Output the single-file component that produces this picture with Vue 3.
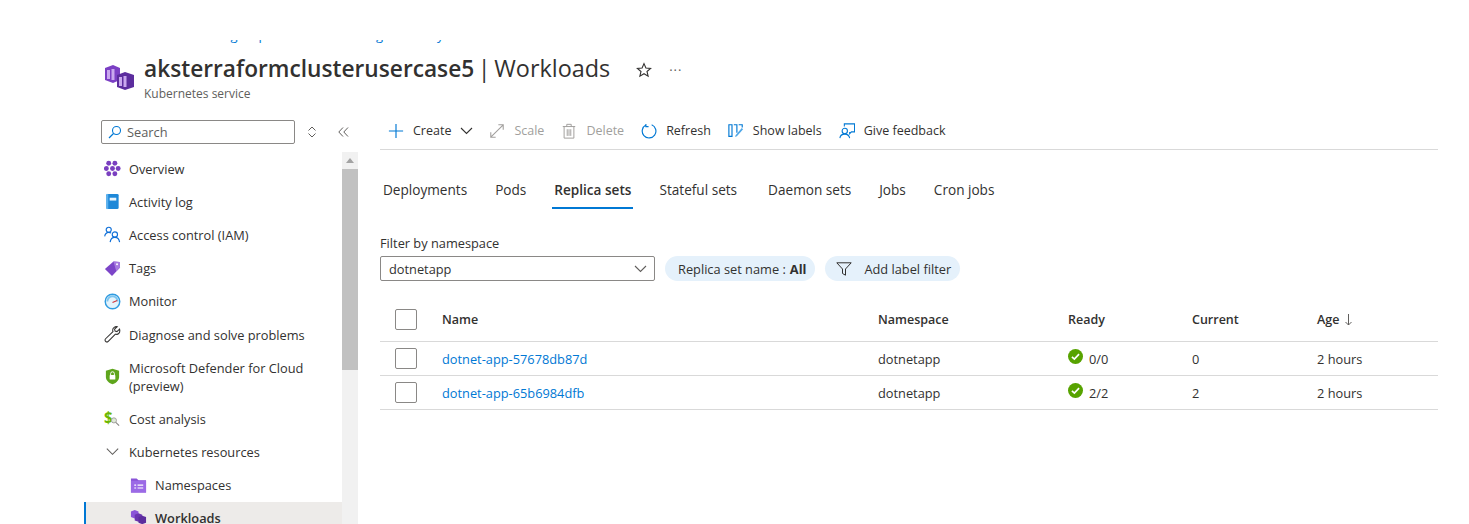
<template>
  <div class="page">
    <div class="crumb-clip"><div class="crumb">Home &gt; Resource groups &gt; aksterraform-rg &gt; Overlay</div></div>

    <header class="title-row">
      <svg class="res-icon" viewBox="0 0 30 26">
        <path d="M1 3 L9 0 L16 3 V15 L9 18 L1 15Z" fill="#7b3fc4"/>
        <path d="M3 5h3v9H3zM7.500 4h3v11h-3z" fill="#c9a8ee"/>
        <path d="M13 10 L21 7 L30 10 V22 L21 25 L13 22Z" fill="#5c2d9e"/>
        <path d="M15 12h3v9h-3zM19.500 11h3v11h-3z" fill="#c9a8ee"/>
      </svg>
      <div class="title-text">
        <h1 class="title"><b>aksterraformclusterusercase5</b> | Workloads</h1>
        <div class="subtitle">Kubernetes service</div>
      </div>
      <svg class="star" viewBox="0 0 16 16"><path d="M8 1.600l1.900 4.400 4.700.4-3.600 3.100 1.100 4.700L8 11.700l-4.100 2.500 1.100-4.700L1.400 6.400l4.700-.4z" fill="none" stroke="#323130" stroke-width="1.100"/></svg>
      <span class="more">···</span>
    </header>

    <div class="body">
      <aside class="side">
        <div class="side-top">
          <div class="search">
            <svg width="14" height="14" viewBox="0 0 14 14"><circle cx="8.500" cy="5.500" r="4" fill="none" stroke="#0078d4" stroke-width="1.100"/><path d="M5.500 8.500L1 13" stroke="#0078d4" stroke-width="1.200"/></svg>
            <span>Search</span>
          </div>
          <svg class="updown" width="10" height="12" viewBox="0 0 10 12"><path d="M1.500 4.500L5 1l3.500 3.500M1.500 7.500L5 11l3.500-3.500" fill="none" stroke="#605e5c"/></svg>
          <svg class="collapse" width="11" height="10" viewBox="0 0 11 10"><path d="M5 .5L.8 5 5 9.500M10 .5L5.800 5 10 9.500" fill="none" stroke="#605e5c"/></svg>
        </div>

        <div class="nav-wrap">
          <nav class="nav">
            <div class="nav-item">
              <svg class="nav-icon" viewBox="0 0 18 18"><g fill="#7a3fc0"><circle cx="5" cy="3.500" r="2.600"/><circle cx="11.500" cy="3.500" r="2.600"/><circle cx="2.500" cy="9" r="2.600"/><circle cx="9" cy="9" r="2.600"/><circle cx="15" cy="9" r="2.600"/><circle cx="5" cy="14.500" r="2.600"/><circle cx="11.500" cy="14.500" r="2.600"/></g></svg>
              <span>Overview</span>
            </div>
            <div class="nav-item">
              <svg class="nav-icon" viewBox="0 0 18 18"><rect x="2.500" y="1" width="13" height="16" rx="1.500" fill="#1e88d8"/><rect x="2.500" y="1" width="2" height="16" fill="#5ab0ee"/><rect x="6" y="5" width="7" height="3" fill="#e8f4fc"/></svg>
              <span>Activity log</span>
            </div>
            <div class="nav-item">
              <svg class="nav-icon" viewBox="0 0 18 18"><g fill="none" stroke="#0f6fd8" stroke-width="1.200"><circle cx="5" cy="4" r="2.700"/><path d="M.7 11c.5-3 2.200-4.300 4.300-4.300 1 0 1.800.2 2.500.7"/><circle cx="11.500" cy="9" r="2.800"/><path d="M6.500 17c.4-3 2.400-5 5-5s4.600 2 5 5"/></g></svg>
              <span>Access control (IAM)</span>
            </div>
            <div class="nav-item">
              <svg class="nav-icon" viewBox="0 0 18 18"><path d="M1 9.500L10 1.500l6.500.5.500 6-8.500 9z" fill="#7c45c8"/><path d="M10 1.500l6.500.5.500 6-4 4z" fill="#a77be0"/><circle cx="13.800" cy="4.500" r="1" fill="#fff"/></svg>
              <span>Tags</span>
            </div>
            <div class="nav-item">
              <svg class="nav-icon" viewBox="0 0 18 18"><circle cx="9" cy="9" r="7.700" fill="#e3f3fc" stroke="#2f9be0" stroke-width="1.500"/><path d="M3.500 9a5.500 5.500 0 0 1 11 0" fill="none" stroke="#7cc4ee" stroke-width="2"/><path d="M9 10l5-2" stroke="#d13438" stroke-width="1.200"/></svg>
              <span>Monitor</span>
            </div>
            <div class="nav-item">
              <svg class="nav-icon" viewBox="0 0 18 18"><path d="M16.500 3.200l-2.800 2.700-2-.5-.5-2L14 .8c-2.300-.6-4.700 1-4.800 3.500 0 .6 0 1.100.3 1.600L1.700 13.500c-.8.800-.8 2 0 2.800s2 .8 2.800 0l7.600-7.700c2.700 1 5.500-1.300 4.400-5.400z" fill="none" stroke="#323130" stroke-width="1.100"/></svg>
              <span>Diagnose and solve problems</span>
            </div>
            <div class="nav-item tall">
              <svg class="nav-icon" viewBox="0 0 18 18"><path d="M9 .8l7 2.200v6.500c0 3.800-3.500 6.500-7 7.700-3.500-1.200-7-3.900-7-7.700V3z" fill="#5ea51c"/><rect x="6" y="7.500" width="6" height="4.800" rx=".6" fill="#fff"/><path d="M7 7.500V6a2 2 0 0 1 4 0v1.500" fill="none" stroke="#fff"/></svg>
              <span>Microsoft Defender for Cloud (preview)</span>
            </div>
            <div class="nav-item">
              <svg class="nav-icon" viewBox="0 0 18 18"><text x="0" y="14" class="dollar">$</text><circle cx="10.500" cy="11" r="2.700" fill="#dfe9d8" stroke="#a19f9d"/><path d="M12.500 13l3.500 3.500" stroke="#8a8886" stroke-width="1.200"/></svg>
              <span>Cost analysis</span>
            </div>
            <div class="nav-item">
              <svg class="nav-icon" viewBox="0 0 18 18"><path d="M3 6l6 6 6-6" fill="none" stroke="#605e5c" stroke-width="1.100"/></svg>
              <span>Kubernetes resources</span>
            </div>
            <div class="nav-item sub">
              <svg class="nav-icon" viewBox="0 0 18 18"><path d="M1 1.500h6l2 2h8v13H1z" fill="#8a54d8"/><path d="M1 4h16v12.500H1z" fill="#9b6ae6"/><path d="M4.500 8h2v1.200h-2zM8 8h6v1.200H8zM4.500 11h2v1.200h-2zM8 11h6v1.200H8z" fill="#fff"/></svg>
              <span>Namespaces</span>
            </div>
            <div class="nav-item sub active">
              <svg class="nav-icon" viewBox="0 0 18 18"><path d="M1 1.500L5 0l4 1.500v6L5 9 1 7.500z" fill="#8a54d8"/><path d="M5 5l4-1.500L13 5v6l-4 1.500L5 11z" fill="#6a35b0"/><path d="M9 7.500l4-1.500 4 1.500v6L13 15l-4-1.500z" fill="#5c2d9e"/></svg>
              <span>Workloads</span>
            </div>
          </nav>
          <div class="scrollbar">
            <div class="arrow"></div>
            <div class="thumb"></div>
          </div>
        </div>
      </aside>

      <main class="main">
        <div class="toolbar">
          <div class="tool">
            <svg class="tool-icon" viewBox="0 0 18 18"><path d="M9 1v16M1 9h16" stroke="#0078d4" stroke-width="1.300"/></svg>
            <span>Create</span>
            <svg class="caret" width="13" height="8" viewBox="0 0 13 8"><path d="M1 1l5.500 5.500L12 1" fill="none" stroke="#323130" stroke-width="1.100"/></svg>
          </div>
          <div class="tool off">
            <svg class="tool-icon" viewBox="0 0 18 18"><path d="M2 16L16 2M10.500 2H16v5.500M2 10.500V16h5.500" fill="none" stroke="#a19f9d" stroke-width="1.200"/></svg>
            <span>Scale</span>
          </div>
          <div class="tool off">
            <svg class="tool-icon" viewBox="0 0 18 18"><path d="M2 4h14M6.500 4V1.500h5V4M3.500 4v13h11V4M7 7v7.500M9 7v7.500M11 7v7.500" fill="none" stroke="#a19f9d" stroke-width="1.100"/></svg>
            <span>Delete</span>
          </div>
          <div class="tool">
            <svg class="tool-icon" viewBox="0 0 18 18"><path d="M5.500 2.300a7.700 7.700 0 1 0 6.500-.3M5.500 1v3h3" fill="none" stroke="#0078d4" stroke-width="1.300"/></svg>
            <span>Refresh</span>
          </div>
          <div class="tool">
            <svg class="tool-icon" viewBox="0 0 18 18"><path d="M1 2h3.500v13H1zM6.500 2H10v9M12 2h4v3" fill="none" stroke="#0078d4" stroke-width="1.300"/><path d="M10 15l7-8-1.500-1.300-7 8-.5 2z" fill="#50a8e8"/></svg>
            <span>Show labels</span>
          </div>
          <div class="tool">
            <svg class="tool-icon" viewBox="0 0 18 18"><circle cx="6.500" cy="9" r="3" fill="none" stroke="#0078d4" stroke-width="1.200"/><path d="M1 17c.3-2.700 2.500-4.500 5.500-4.500s5 1.800 5.500 4.500" fill="none" stroke="#0078d4" stroke-width="1.200"/><path d="M6 4V1h11.500v9H14l-2 2v-2" fill="none" stroke="#0078d4" stroke-width="1.200"/></svg>
            <span>Give feedback</span>
          </div>
        </div>

        <div class="tabs">
          <div v-for="tab in tabs" :key="tab" class="tab" :class="{ selected: tab === 'Replica sets' }">{{ tab }}</div>
        </div>

        <div class="filter-label">Filter by namespace</div>
        <div class="filters">
          <div class="select">
            <span>dotnetapp</span>
            <svg width="13" height="8" viewBox="0 0 13 8"><path d="M1 1l5.500 5.500L12 1" fill="none" stroke="#605e5c" stroke-width="1.100"/></svg>
          </div>
          <div class="pill">Replica set name : <b>All</b></div>
          <div class="pill add">
            <svg width="16" height="14" viewBox="0 0 16 14"><path d="M.8.800h14.400L9.500 7v6.200L6.500 11.500V7z" fill="none" stroke="#323130"/></svg>
            <span>Add label filter</span>
          </div>
        </div>

        <div class="table">
          <div class="row head">
            <div class="check"></div>
            <div>Name</div>
            <div>Namespace</div>
            <div>Ready</div>
            <div>Current</div>
            <div class="age">
              <span>Age</span>
              <svg width="7" height="12" viewBox="0 0 7 12"><path d="M3.500 0v11M.5 8l3 3 3-3" fill="none" stroke="#605e5c"/></svg>
            </div>
          </div>
          <div v-for="rs in replicaSets" :key="rs.name" class="row">
            <div class="check"></div>
            <div class="link">{{ rs.name }}</div>
            <div>dotnetapp</div>
            <div class="ready">
              <svg width="15" height="15" viewBox="0 0 16 16"><circle cx="8" cy="8" r="8" fill="#57a300"/><path d="M4.200 8.300l2.600 2.500 5-5.300" fill="none" stroke="#fff" stroke-width="1.800"/></svg>
              <span>{{ rs.ready }}</span>
            </div>
            <div>{{ rs.current }}</div>
            <div>2 hours</div>
          </div>
        </div>
      </main>
    </div>
  </div>
</template>

<script setup>
const tabs = ['Deployments', 'Pods', 'Replica sets', 'Stateful sets', 'Daemon sets', 'Jobs', 'Cron jobs']

const replicaSets = [
  { name: 'dotnet-app-57678db87d', ready: '0/0', current: 0 },
  { name: 'dotnet-app-65b6984dfb', ready: '2/2', current: 2 },
]
</script>

<style>
html, body {
  margin: 0;
  background: #fff;
  overflow: hidden;
}
</style>

<style scoped>
.page {
  width: 1469px;
  height: 524px;
  overflow: hidden;
  background: #fff;
  color: #323130;
  font-family: "Open Sans", "Noto Sans", sans-serif;
  font-size: 12.800px;
  box-sizing: border-box;
}

/* only the descenders of the breadcrumb are left in the shot */
.crumb-clip {
  height: 3px;
  margin-top: 40px;
  padding-left: 120px;
  overflow: hidden;
}
.crumb {
  margin-top: -13px;
  color: #0078d4;
  font-size: 13px;
  line-height: 16px;
  white-space: nowrap;
}

.title-row {
  display: flex;
  align-items: flex-start;
  height: 75px;
  padding: 8px 0 0 104px;
  box-sizing: border-box;
}
.res-icon {
  width: 30px;
  height: 26px;
  margin-top: 14px;
  margin-right: 10px;
}
.title {
  margin: 0;
  font-size: 23.400px;
  font-weight: 400;
  line-height: 34px;
  word-spacing: -2.500px;
  white-space: nowrap;
}
.title b {
  font-size: 22.700px;
  font-weight: 600;
}
.subtitle {
  font-size: 12px;
  line-height: 16px;
  color: #605e5c;
}
.star {
  width: 16px;
  height: 16px;
  margin: 11px 0 0 26px;
}
.more {
  margin: 9px 0 0 17px;
  font-size: 13px;
  line-height: 20px;
  letter-spacing: 1px;
  color: #605e5c;
}

.body {
  display: flex;
}

.side {
  width: 274px;
  margin-left: 84px;
  flex-shrink: 0;
}
.side-top {
  display: flex;
  align-items: center;
  height: 25px;
  padding: 1px 0 0 17px;
}
.search {
  display: flex;
  align-items: center;
  gap: 5px;
  width: 194px;
  height: 24px;
  padding-left: 6px;
  border: 1px solid #8a8886;
  border-radius: 2px;
  box-sizing: border-box;
  color: #605e5c;
}
.updown {
  margin-left: 12px;
}
.collapse {
  margin-left: 21px;
}

.nav-wrap {
  display: flex;
  margin-top: 8px;
}
.nav {
  width: 258px;
}
.nav-item {
  display: flex;
  align-items: center;
  gap: 8px;
  height: 33.200px;
  padding-left: 20px;
  line-height: 18px;
  box-sizing: border-box;
}
.nav-item.tall {
  height: 51px;
}
.nav-icon {
  width: 17px;
  height: 17px;
  flex-shrink: 0;
}
.dollar {
  font-size: 16px;
  font-weight: 700;
  fill: #6bb700;
}
.nav-item.sub {
  padding-left: 46px;
}
.nav-item.active {
  background: #edebe9;
  border-left: 2px solid #0078d4;
  padding-left: 44px;
  font-weight: 600;
}

.scrollbar {
  width: 16px;
  height: 400px;
  background: #f1f1f1;
}
.arrow {
  width: 0;
  margin: 6px auto 6px;
  border: 4px solid transparent;
  border-top: 0;
  border-bottom: 5px solid #a3a3a3;
}
.thumb {
  height: 201px;
  background: #c1c1c1;
}

.main {
  flex: 0 0 1058px;
  margin-left: 22px;
}
.toolbar {
  display: flex;
  align-items: center;
  height: 38px;
  margin-top: -6px;
  padding-left: 8px;
  gap: 17px;
  font-size: 12.500px;
  border-bottom: 1px solid #d9d9d9;
  box-sizing: border-box;
}
.tool {
  display: flex;
  align-items: center;
  gap: 9px;
}
.tool-icon {
  width: 16px;
  height: 16px;
}
.tool.off {
  color: #a19f9d;
}
.caret {
  margin-right: -1px;
}

.tabs {
  display: flex;
  gap: 28px;
  height: 59px;
  padding: 29px 0 0 3px;
  box-sizing: border-box;
  font-size: 13.600px;
}
.tab {
  height: 30px;
  line-height: 22px;
  white-space: nowrap;
}
.tab:nth-child(5) {
  margin-left: 3px;
}
.tab.selected {
  font-weight: 600;
  border-bottom: 2px solid #0078d4;
  box-sizing: border-box;
  margin: 0 -2px;
  padding: 0 2px;
}

.filter-label {
  margin-top: 26px;
  line-height: 16px;
}
.filters {
  display: flex;
  align-items: center;
  gap: 10px;
  margin-top: 5px;
}
.select {
  display: flex;
  align-items: center;
  justify-content: space-between;
  width: 275px;
  height: 25px;
  padding: 0 7px 0 8px;
  border: 1px solid #8a8886;
  border-radius: 2px;
  box-sizing: border-box;
}
.pill {
  display: flex;
  align-items: center;
  gap: 4px;
  height: 25px;
  padding: 0 9px 0 13px;
  border-radius: 13px;
  background: #e5f1fb;
  white-space: nowrap;
}
.pill.add {
  gap: 12px;
  padding: 0 9px 0 11px;
}

.table {
  margin-top: 16px;
}
.row {
  display: grid;
  grid-template-columns: 62px 436px 190px 124px 125px 1fr;
  align-items: center;
  height: 34px;
  border-bottom: 1px solid #d9d9d9;
  box-sizing: border-box;
}
.row.head {
  height: 45px;
  padding-top: 1px;
  font-size: 12.500px;
  font-weight: 600;
}
.check {
  width: 22px;
  height: 21px;
  margin-left: 15px;
  border: 1px solid #8a8886;
  border-radius: 2px;
  box-sizing: border-box;
}
.age {
  display: flex;
  align-items: center;
  gap: 6px;
}
.link {
  color: #0078d4;
}
.ready {
  display: flex;
  align-items: center;
}
.ready svg {
  margin-right: 6px;
  margin-top: -5px;
}
</style>
